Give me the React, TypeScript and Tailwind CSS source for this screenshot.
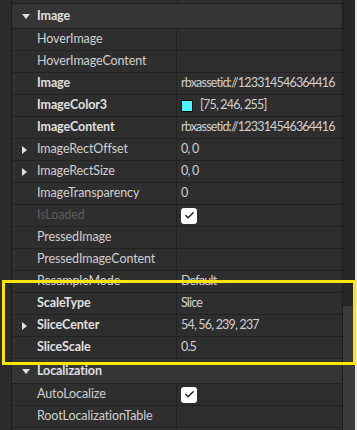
import { Check } from "lucide-react";

type Row = {
  name: string;
  value?: string;
  bold?: boolean;
  arrow?: boolean;
  disabled?: boolean;
  check?: boolean;
  color?: string;
};

const imageRows: Row[] = [
  { name: "HoverImage" },
  { name: "HoverImageContent" },
  { name: "Image", value: "rbxassetid://123314546364416", bold: true },
  { name: "ImageColor3", value: "[75, 246, 255]", bold: true, color: "#4bf6ff" },
  { name: "ImageContent", value: "rbxassetid://123314546364416", bold: true },
  { name: "ImageRectOffset", value: "0, 0", arrow: true },
  { name: "ImageRectSize", value: "0, 0", arrow: true },
  { name: "ImageTransparency", value: "0" },
  { name: "IsLoaded", disabled: true, check: true },
  { name: "PressedImage" },
  { name: "PressedImageContent" },
  { name: "ResampleMode", value: "Default" },
  { name: "ScaleType", value: "Slice", bold: true },
  { name: "SliceCenter", value: "54, 56, 239, 237", bold: true, arrow: true },
  { name: "SliceScale", value: "0.5", bold: true },
];

const localizationRows: Row[] = [
  { name: "AutoLocalize", check: true },
  { name: "RootLocalizationTable" },
];

function Header({ title }: { title: string }) {
  return (
    <div className="flex h-[25px] shrink-0 items-center border-b border-[#222222] bg-[#353535]">
      <div className="ml-[10px] flex w-[15px] shrink-0">
        <svg width="8" height="5" viewBox="0 0 8 5">
          <path d="M0 0h8L4 5z" fill="#e0e0e0" />
        </svg>
      </div>
      <span className="font-bold text-[#e0e0e0]">{title}</span>
    </div>
  );
}

function PropRow({ row }: { row: Row }) {
  return (
    <div className="flex h-[22px] shrink-0 border-b border-[#222222] bg-[#2e2e2e]">
      <div className="flex w-[165px] shrink-0 items-center border-r border-[#222222]">
        <div className="ml-[10px] flex w-[15px] shrink-0">
          {row.arrow && (
            <svg width="5" height="8" viewBox="0 0 5 8">
              <path d="M0 0v8l5-4z" fill="#e0e0e0" />
            </svg>
          )}
        </div>
        <span
          className={
            row.disabled
              ? "text-[#5c5c5c]"
              : row.bold
                ? "font-bold text-[#e0e0e0]"
                : "text-[#d0d0d0]"
          }
        >
          {row.name}
        </span>
      </div>
      <div className="flex min-w-0 flex-1 items-center overflow-hidden whitespace-nowrap pl-[4px] tracking-[-0.8px] text-[#d0d0d0]">
        {row.check && (
          <div className="flex h-[16px] w-[16px] items-center justify-center rounded-[3px] bg-white">
            <Check className="h-[11px] w-[11px] text-[#1e1e1e]" strokeWidth={3} />
          </div>
        )}
        {row.color && (
          <div
            className="mr-[7px] h-[12px] w-[12px] shrink-0 border border-[#111111]"
            style={{ backgroundColor: row.color }}
          />
        )}
        {row.value && <span>{row.value}</span>}
      </div>
    </div>
  );
}

export default function App() {
  return (
    <div
      className="relative flex h-[430px] w-[357px] overflow-hidden bg-[#2e2e2e] text-[12.5px] tracking-[-0.1px]"
      style={{ fontFamily: "Lato, 'Noto Sans', sans-serif" }}
    >
      {/* left gutter */}
      <div className="w-[12px] shrink-0 border-r border-[#1e1e1e] bg-[#2b2b2b]" />

      {/* property grid */}
      <div className="flex w-[330px] shrink-0 flex-col">
        <div className="flex h-[4px] shrink-0 border-b border-[#222222]">
          <div className="w-[165px] border-r border-[#222222]" />
        </div>
        <Header title="Image" />
        {imageRows.map((r) => (
          <PropRow key={r.name} row={r} />
        ))}
        <Header title="Localization" />
        {localizationRows.map((r) => (
          <PropRow key={r.name} row={r} />
        ))}
        <PropRow row={{ name: "" }} />
      </div>

      {/* scrollbar */}
      <div className="flex w-[13px] shrink-0 flex-col border-l border-[#1e1e1e] bg-[#262626]">
        <div className="h-[306px]" />
        <div className="flex-1 bg-[#3a3a3a]" />
      </div>
      <div className="w-[2px] shrink-0 bg-[#e8e8e8]" />

      {/* highlight box */}
      <div className="absolute left-[2px] top-[280px] h-[85px] w-[354px] border-[3px] border-[#ffe500]" />
    </div>
  );
}
